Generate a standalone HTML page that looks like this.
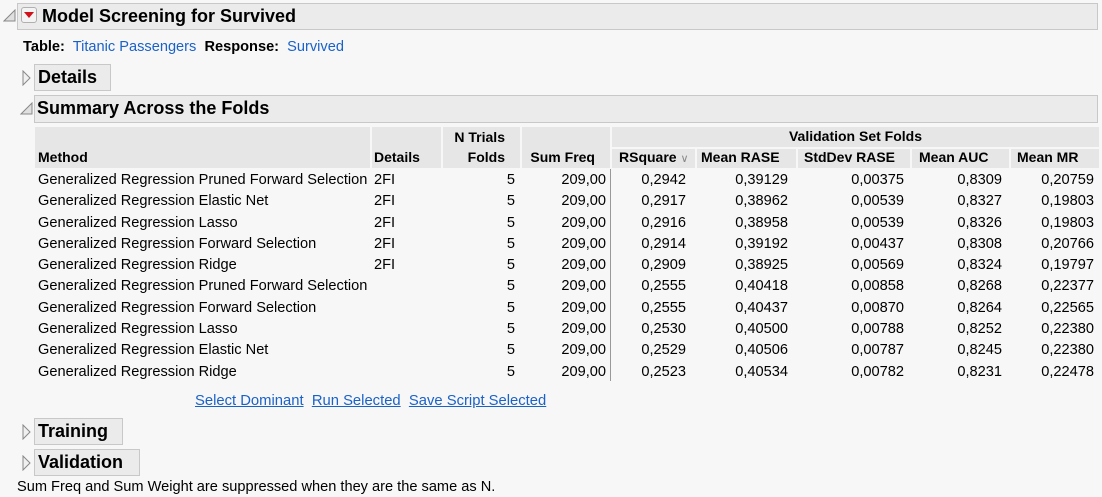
<!DOCTYPE html>
<html><head><meta charset="utf-8"><style>
body{margin:0;width:1102px;height:497px;background:#f7f7f7;font-family:"Liberation Sans",sans-serif;font-size:14.6px;color:#000;position:relative;overflow:hidden}
.a{position:absolute;white-space:nowrap}
.bar{position:absolute;background:#ebebeb;border:1px solid #c8c8c8;box-sizing:border-box}
.h{font-weight:bold;font-size:18px}
.lnk{color:#1a62c8}
.u{text-decoration:underline;color:#1a62c8}
.hd{position:absolute;background:#e6e6e6}
.b{font-weight:bold;font-size:14px}
.r{text-align:right}
</style></head><body>
<svg class="a" style="left:3px;top:9px" width="14" height="14"><path d="M12 1 L12 12 L1 12 Z" fill="#e0e0e0" stroke="#888" stroke-width="1"/></svg>
<div class="bar" style="left:17px;top:3px;width:1081px;height:27px"></div>
<div class="a" style="left:21px;top:7px;width:16px;height:16px;border:1px solid #b0b0b0;border-radius:3px;background:#f3f3f3;box-sizing:border-box"></div>
<svg class="a" style="left:23px;top:12px" width="12" height="7"><path d="M1 0 L11 0 L6 6 Z" fill="#d0101a"/></svg>
<div class="a h" style="left:42px;top:6px">Model Screening for Survived</div>
<div class="a" style="left:23px;top:39px"><b>Table:</b>&nbsp; <span class="lnk">Titanic Passengers</span>&nbsp; <b>Response:</b>&nbsp; <span class="lnk">Survived</span></div>
<svg class="a" style="left:22px;top:70px" width="10" height="16"><path d="M1 1 L8 8 L1 15 Z" fill="#f0f0f0" stroke="#888"/></svg>
<div class="bar" style="left:34px;top:64px;width:77px;height:27px"></div>
<div class="a h" style="left:38px;top:67px">Details</div>
<svg class="a" style="left:20px;top:102px" width="14" height="14"><path d="M12 1 L12 12 L1 12 Z" fill="#e0e0e0" stroke="#888"/></svg>
<div class="bar" style="left:34px;top:95px;width:1064px;height:28px"></div>
<div class="a h" style="left:37px;top:98px">Summary Across the Folds</div>
<div class="hd" style="left:35px;top:127px;width:335px;height:41px"></div>
<div class="hd" style="left:372px;top:127px;width:69px;height:41px"></div>
<div class="hd" style="left:443px;top:127px;width:77px;height:41px"></div>
<div class="hd" style="left:522px;top:127px;width:88px;height:41px"></div>
<div class="hd" style="left:612px;top:127px;width:487px;height:20px"></div>
<div class="hd" style="left:612px;top:149px;width:83px;height:19px"></div>
<div class="hd" style="left:697px;top:149px;width:99px;height:19px"></div>
<div class="hd" style="left:798px;top:149px;width:112px;height:19px"></div>
<div class="hd" style="left:912px;top:149px;width:97px;height:19px"></div>
<div class="hd" style="left:1011px;top:149px;width:88px;height:19px"></div>
<div class="a b" style="left:38px;top:149px">Method</div>
<div class="a b" style="left:374px;top:149px">Details</div>
<div class="a b r" style="left:440px;top:129px;width:65px">N Trials</div>
<div class="a b r" style="left:440px;top:149px;width:65px">Folds</div>
<div class="a b r" style="left:520px;top:149px;width:75px">Sum Freq</div>
<div class="a b r" style="left:700px;top:128px;width:222px">Validation Set Folds</div>
<div class="a b" style="left:619px;top:149px">RSquare <span style="font-weight:normal;color:#888;font-size:11px">&#8744;</span></div>
<div class="a b" style="left:701px;top:149px">Mean RASE</div>
<div class="a b" style="left:804px;top:149px">StdDev RASE</div>
<div class="a b" style="left:919px;top:149px">Mean AUC</div>
<div class="a b" style="left:1017px;top:149px">Mean MR</div>
<div class="a" style="left:610px;top:169px;width:1px;height:212px;background:#999"></div>
<div class="a" style="left:38px;top:170px;line-height:21.3px">Generalized Regression Pruned Forward Selection<br>Generalized Regression Elastic Net<br>Generalized Regression Lasso<br>Generalized Regression Forward Selection<br>Generalized Regression Ridge<br>Generalized Regression Pruned Forward Selection<br>Generalized Regression Forward Selection<br>Generalized Regression Lasso<br>Generalized Regression Elastic Net<br>Generalized Regression Ridge</div>
<div class="a" style="left:374px;top:170px;line-height:21.3px">2FI<br>2FI<br>2FI<br>2FI<br>2FI</div>
<div class="a r" style="left:480px;top:170px;width:35px;line-height:21.3px">5<br>5<br>5<br>5<br>5<br>5<br>5<br>5<br>5<br>5</div>
<div class="a r" style="left:530px;top:170px;width:76px;line-height:21.3px">209,00<br>209,00<br>209,00<br>209,00<br>209,00<br>209,00<br>209,00<br>209,00<br>209,00<br>209,00</div>
<div class="a r" style="left:620px;top:170px;width:66px;line-height:21.3px">0,2942<br>0,2917<br>0,2916<br>0,2914<br>0,2909<br>0,2555<br>0,2555<br>0,2530<br>0,2529<br>0,2523</div>
<div class="a r" style="left:700px;top:170px;width:88px;line-height:21.3px">0,39129<br>0,38962<br>0,38958<br>0,39192<br>0,38925<br>0,40418<br>0,40437<br>0,40500<br>0,40506<br>0,40534</div>
<div class="a r" style="left:800px;top:170px;width:104px;line-height:21.3px">0,00375<br>0,00539<br>0,00539<br>0,00437<br>0,00569<br>0,00858<br>0,00870<br>0,00788<br>0,00787<br>0,00782</div>
<div class="a r" style="left:920px;top:170px;width:82px;line-height:21.3px">0,8309<br>0,8327<br>0,8326<br>0,8308<br>0,8324<br>0,8268<br>0,8264<br>0,8252<br>0,8245<br>0,8231</div>
<div class="a r" style="left:1010px;top:170px;width:84px;line-height:21.3px">0,20759<br>0,19803<br>0,19803<br>0,20766<br>0,19797<br>0,22377<br>0,22565<br>0,22380<br>0,22380<br>0,22478</div>
<div class="a" style="left:195px;top:393px;font-size:14.8px"><span class="u">Select Dominant</span>&nbsp; <span class="u">Run Selected</span>&nbsp; <span class="u">Save Script Selected</span></div>
<svg class="a" style="left:22px;top:424px" width="10" height="16"><path d="M1 1 L8 8 L1 15 Z" fill="#f0f0f0" stroke="#888"/></svg>
<div class="bar" style="left:34px;top:418px;width:89px;height:27px"></div>
<div class="a h" style="left:38px;top:421px">Training</div>
<svg class="a" style="left:22px;top:455px" width="10" height="16"><path d="M1 1 L8 8 L1 15 Z" fill="#f0f0f0" stroke="#888"/></svg>
<div class="bar" style="left:34px;top:449px;width:106px;height:27px"></div>
<div class="a h" style="left:38px;top:452px">Validation</div>
<div class="a" style="left:17px;top:479px;font-size:14.6px">Sum Freq and Sum Weight are suppressed when they are the same as N.</div>
</body></html>
